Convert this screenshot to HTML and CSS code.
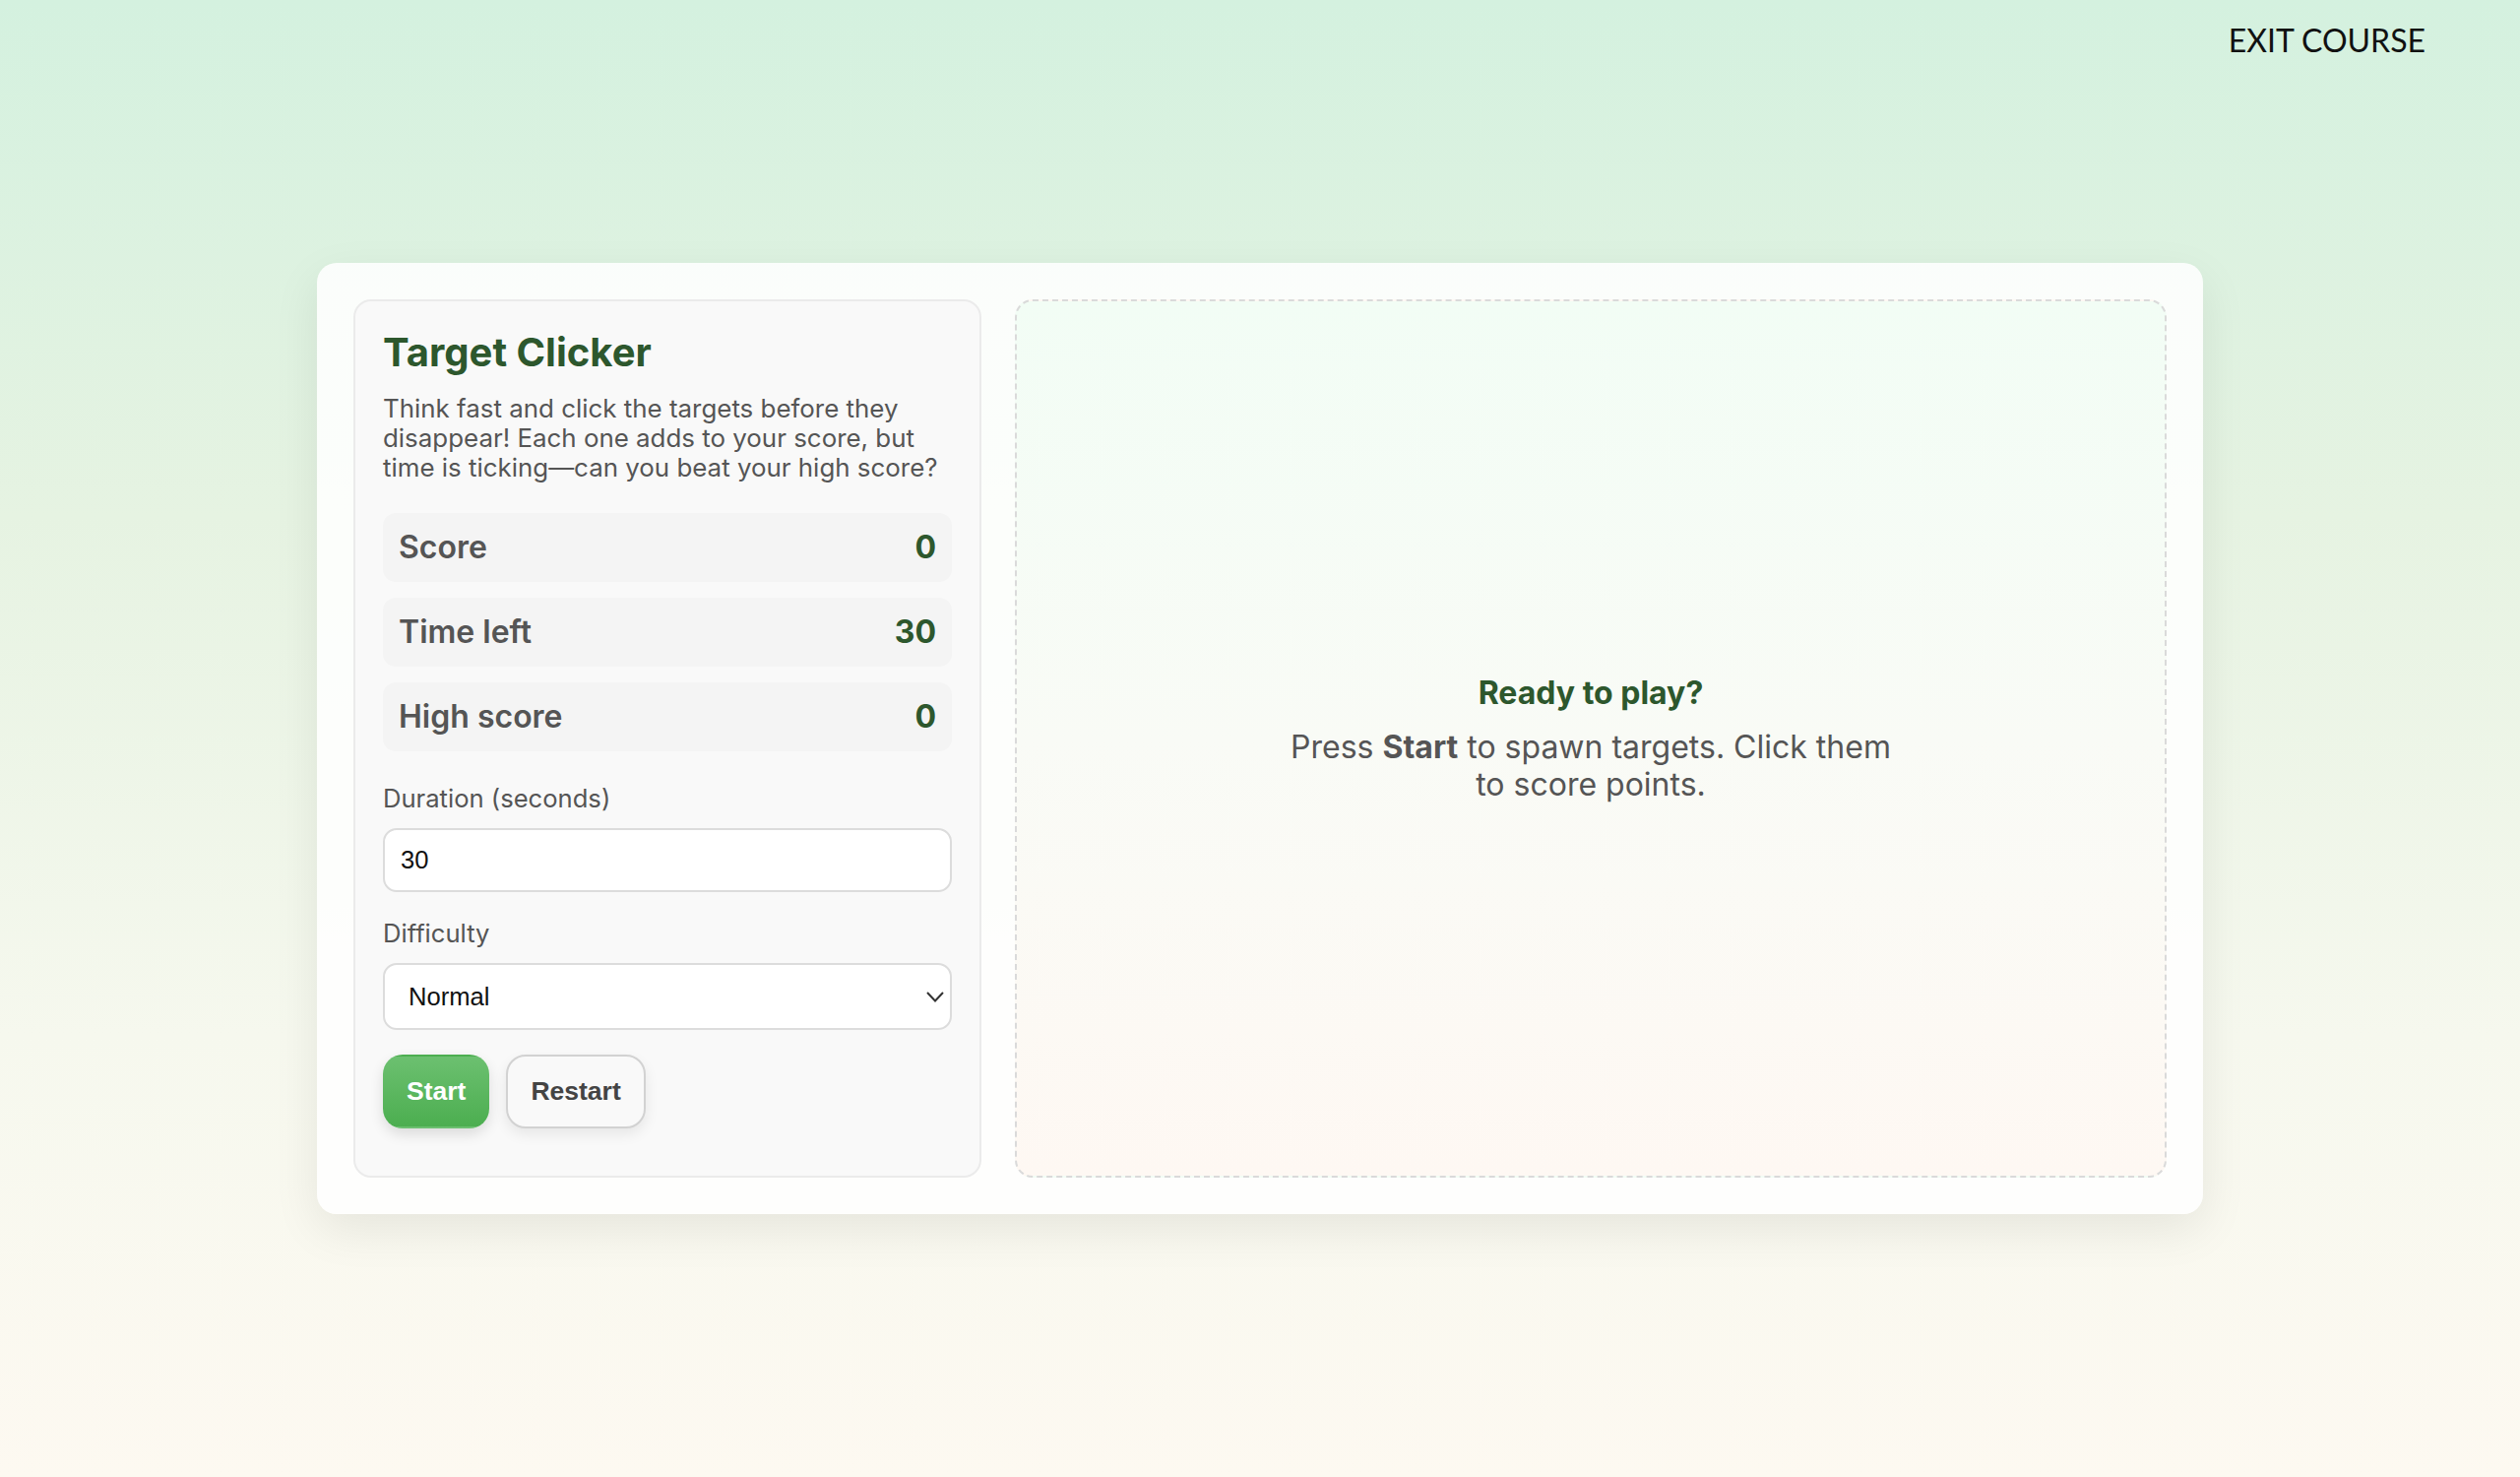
FILE: index.html
```html
<!DOCTYPE html>
<html lang="en">
<head>
<meta charset="utf-8">
<title>Target Clicker</title>
<link rel="stylesheet" href="styles.css">
</head>
<body>
<a class="exit-link" href="#">EXIT COURSE</a>
<main class="card">
  <section class="side">
    <h1 class="title">Target Clicker</h1>
    <p class="desc">Think fast and click the targets before they disappear! Each one adds to your score, but time is ticking—can you beat your high score?</p>
    <div class="stats">
      <div class="stat"><span class="stat-label">Score</span><span class="stat-value">0</span></div>
      <div class="stat"><span class="stat-label">Time left</span><span class="stat-value">30</span></div>
      <div class="stat"><span class="stat-label">High score</span><span class="stat-value">0</span></div>
    </div>
    <label class="field-label" for="duration">Duration (seconds)</label>
    <input class="text-input" id="duration" type="number" value="30">
    <label class="field-label" for="difficulty">Difficulty</label>
    <div class="select-wrap">
      <select class="select" id="difficulty">
        <option>Easy</option>
        <option selected>Normal</option>
        <option>Hard</option>
      </select>
      <svg class="chevron" width="18" height="11" viewBox="0 0 18 11"><path d="M1 1 L9 9.5 L17 1" fill="none" stroke="#333" stroke-width="2"/></svg>
    </div>
    <div class="actions">
      <button class="btn btn-primary" type="button">Start</button>
      <button class="btn btn-secondary" type="button">Restart</button>
    </div>
  </section>
  <section class="arena">
    <h2 class="arena-title">Ready to play?</h2>
    <p class="arena-text">Press <strong>Start</strong> to spawn targets. Click them to score points.</p>
  </section>
</main>
</body>
</html>
```
FILE: styles.css
```css
* { box-sizing: border-box; }

html, body { margin: 0; padding: 0; }

body {
  min-height: 100vh;
  display: flex;
  align-items: center;
  justify-content: center;
  background: linear-gradient(180deg, #d4f1df 0%, #e6f3e2 35%, #f6f8ee 70%, #fdf9f1 100%);
  font-family: Inter, "Noto Sans", sans-serif;
  color: #555;
}

.exit-link {
  position: absolute;
  top: 22px;
  right: 96px;
  font-family: Lato, sans-serif;
  font-size: 32px;
  color: #111;
  text-decoration: none;
  line-height: 38px;
}

.card {
  width: 1916px;
  padding: 37px;
  background: rgba(255, 255, 255, 0.86);
  border-radius: 20px;
  box-shadow: 0 16px 48px rgba(0, 0, 0, 0.08);
  display: grid;
  grid-template-columns: 638px 1fr;
  gap: 34px;
}

.side {
  background: #f9f9f9;
  border: 2px solid #ebebeb;
  border-radius: 18px;
  padding: 28px;
  display: flex;
  flex-direction: column;
}

.title {
  margin: 1px 0 18px;
  font-size: 40px;
  font-weight: 700;
  color: #2d572d;
  line-height: 46.5px;
}

.desc {
  margin: 0 0 31px;
  font-size: 25.9px;
  line-height: 30px;
  color: #555;
}

.stats {
  display: flex;
  flex-direction: column;
  gap: 16px;
  margin-bottom: 32px;
}

.stat {
  height: 70px;
  padding: 0 16px;
  background: #f4f4f4;
  border-radius: 13px;
  display: flex;
  align-items: center;
  justify-content: space-between;
  font-size: 32px;
}

.stat-label {
  font-weight: 600;
  color: #555;
}

.stat-value {
  font-weight: 700;
  color: #2d572d;
}

.field-label {
  display: block;
  font-size: 25.6px;
  line-height: 31px;
  color: #555;
  margin-bottom: 15px;
}

.text-input {
  display: block;
  width: 100%;
  height: 65px;
  padding: 0 16px;
  border: 2px solid #dcdcdc;
  border-radius: 14px;
  background: #fff;
  font-family: "Liberation Sans", Arial, sans-serif;
  font-size: 25.6px;
  color: #111;
  margin-bottom: 26px;
  -moz-appearance: textfield;
}

.text-input::-webkit-outer-spin-button,
.text-input::-webkit-inner-spin-button {
  -webkit-appearance: none;
  margin: 0;
}

.select-wrap {
  position: relative;
  margin-bottom: 25px;
}

.select {
  display: block;
  width: 100%;
  height: 68px;
  padding: 0 24px;
  border: 2px solid #dcdcdc;
  border-radius: 14px;
  background: #fff;
  font-family: "Liberation Sans", Arial, sans-serif;
  font-size: 25.6px;
  color: #111;
  appearance: none;
  -webkit-appearance: none;
}

.chevron {
  position: absolute;
  right: 8px;
  top: 29px;
  pointer-events: none;
}

.actions {
  display: flex;
  gap: 17px;
}

.btn {
  height: 75px;
  padding: 0 22px;
  border-radius: 20px;
  font-family: "Liberation Sans", Arial, sans-serif;
  font-size: 26.5px;
  font-weight: 700;
  cursor: pointer;
}

.btn-primary {
  border: 2px solid transparent;
  background: linear-gradient(180deg, #6cc070 0%, #4cae50 100%);
  color: #fff;
  box-shadow: 0 6px 14px rgba(0, 0, 0, 0.12);
}

.btn-secondary {
  border: 2px solid #d2d2d2;
  background: #f9f9f9;
  color: #444;
  padding: 0 23px;
  box-shadow: 0 6px 14px rgba(0, 0, 0, 0.08);
}

.arena {
  min-height: 892px;
  border: 2px dashed #dadada;
  border-radius: 18px;
  background: linear-gradient(180deg, #f2fdf5 0%, #f9fbf6 50%, #fef8f3 100%);
  display: flex;
  flex-direction: column;
  align-items: center;
  justify-content: center;
  text-align: center;
}

.arena-title {
  margin: 2px 0 16px;
  font-size: 32px;
  font-weight: 700;
  color: #2d572d;
  line-height: 38.7px;
}

.arena-text {
  margin: 0;
  max-width: 640px;
  font-size: 32px;
  line-height: 38.4px;
  color: #555;
}

.arena-text strong {
  font-weight: 700;
}
```
